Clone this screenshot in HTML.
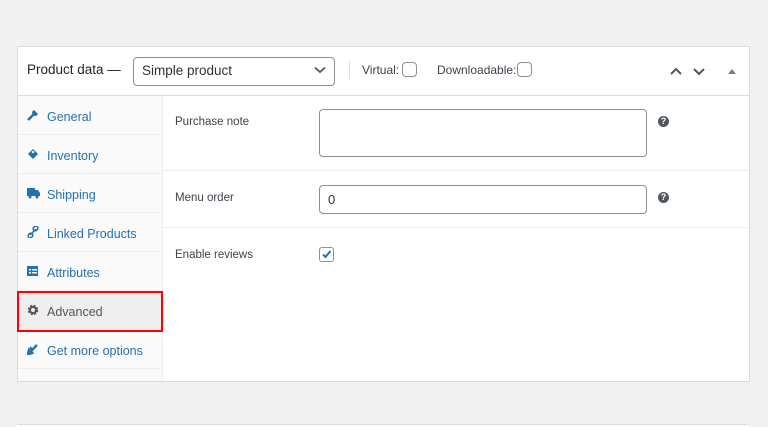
<!DOCTYPE html>
<html><head><style>
body{margin:0;width:768px;height:426px;background:#f1f1f1;font-family:"Liberation Sans",sans-serif;position:relative;overflow:hidden;font-size:12px;color:#3c434a}
.a{position:absolute}
.panel{left:17px;top:46px;width:731px;height:334px;background:#fff;border:1px solid #dcdcde}
.side{left:18px;top:96px;width:144px;height:285px;background:#fafafa;border-right:1px solid #eee}
.tab{position:absolute;left:0;width:144px;height:38px;border-bottom:1px solid #eee;color:#2271b1;font-size:12.5px}
.tab span{position:absolute;left:29px;top:14px}
.tab svg{position:absolute;left:9px;top:13px}
.lbl{font-size:11.5px;color:#3c434a}
.inp{border:1px solid #8c8f94;border-radius:4px;background:#fff}
.help{width:11px;height:11px;border-radius:50%;background:#50575e;color:#fff;font-size:9px;font-weight:bold;text-align:center;line-height:11px}
.cb{width:13px;height:13px;border:1px solid #8c8f94;border-radius:3px;background:#fff}
</style></head><body>
<div class="a panel"></div>
<div class="a" style="left:18px;top:95px;width:731px;height:1px;background:#dcdcde"></div>
<div class="a" style="left:27px;top:62px;font-size:13.5px;color:#1d2327">Product data —</div>
<div class="a inp" style="left:133px;top:57px;width:200px;height:27px"></div>
<div class="a" style="left:142px;top:63px;font-size:13.5px;color:#2c3338">Simple product</div>
<svg class="a" style="left:314px;top:66px" width="12" height="8"><path d="M1 1.5L6 6 11 1.5" stroke="#50575e" stroke-width="1.8" fill="none"/></svg>
<div class="a" style="left:349px;top:61px;width:1px;height:18px;background:#dcdcde"></div>
<div class="a" style="left:362px;top:63px;font-size:12px;color:#3c434a">Virtual:</div>
<div class="a cb" style="left:402px;top:62px;border-radius:4px"></div>
<div class="a" style="left:437px;top:63px;font-size:12px;color:#3c434a">Downloadable:</div>
<div class="a cb" style="left:517px;top:62px;border-radius:4px"></div>
<svg class="a" style="left:669px;top:65px" width="80" height="12"><path d="M2 9L7 4 12 9M25 4L30 9 35 4" stroke="#50575e" stroke-width="2" fill="none"/><path d="M59 9L63 4 67 9Z" fill="#787c82"/></svg>
<div class="a side">
<div class="tab" style="top:0"><svg width="12" height="12"><path d="M1 11L6 6" stroke="#2271b1" stroke-width="2.5"/><circle cx="8" cy="4" r="3" fill="#2271b1"/><path d="M8 1L11 4" stroke="#fafafa" stroke-width="1.5"/></svg><span>General</span></div>
<div class="tab" style="top:39px"><svg width="12" height="12"><path d="M1 6L6 1 11 6 6 11Z" fill="#2271b1"/><circle cx="6" cy="4" r="1.2" fill="#fafafa"/></svg><span>Inventory</span></div>
<div class="tab" style="top:78px"><svg width="13" height="12"><rect x="0" y="1" width="8" height="8" fill="#2271b1"/><path d="M8 3h3l2 3v3H8Z" fill="#2271b1"/><circle cx="3" cy="10" r="1.5" fill="#2271b1"/><circle cx="10" cy="10" r="1.5" fill="#2271b1"/></svg><span>Shipping</span></div>
<div class="tab" style="top:117px"><svg width="12" height="12"><path d="M3 9L9 3" stroke="#2271b1" stroke-width="1.5"/><rect x="6" y="0.5" width="5" height="4" rx="2" transform="rotate(-45 8.5 2.5)" fill="none" stroke="#2271b1" stroke-width="1.5"/><rect x="1" y="7.5" width="5" height="4" rx="2" transform="rotate(-45 3.5 9.5)" fill="none" stroke="#2271b1" stroke-width="1.5"/></svg><span>Linked Products</span></div>
<div class="tab" style="top:156px"><svg width="12" height="12"><rect x="0" y="1" width="11" height="10" fill="#2271b1"/><rect x="2" y="4" width="2" height="1.5" fill="#fafafa"/><rect x="5" y="4" width="5" height="1.5" fill="#fafafa"/><rect x="2" y="7" width="2" height="1.5" fill="#fafafa"/><rect x="5" y="7" width="5" height="1.5" fill="#fafafa"/></svg><span>Attributes</span></div>
<div class="tab" style="top:195px;background:#eee;color:#50575e"><svg width="12" height="12"><circle cx="6" cy="6" r="4" fill="none" stroke="#50575e" stroke-width="2.5" stroke-dasharray="2 1.2"/><circle cx="6" cy="6" r="3" fill="none" stroke="#50575e" stroke-width="2"/></svg><span>Advanced</span></div>
<div class="tab" style="top:234px"><svg width="12" height="12"><path d="M2 10L10 2M1 11l4-1-3-3Z" stroke="#2271b1" stroke-width="2.5" fill="#2271b1"/><path d="M3 4l3 4" stroke="#2271b1" stroke-width="2"/></svg><span>Get more options</span></div>
</div>
<div class="a" style="left:17px;top:291px;width:142px;height:37px;border:2px solid #f00"></div>
<div class="a lbl" style="left:175px;top:116px">Purchase note</div>
<div class="a inp" style="left:319px;top:109px;width:326px;height:46px"></div>
<div class="a help" style="left:658px;top:116px">?</div>
<div class="a" style="left:163px;top:170px;width:585px;height:1px;background:#eee"></div>
<div class="a lbl" style="left:175px;top:192px">Menu order</div>
<div class="a inp" style="left:319px;top:185px;width:326px;height:27px"></div>
<div class="a" style="left:328px;top:192px;font-size:13px;color:#2c3338">0</div>
<div class="a help" style="left:658px;top:192px">?</div>
<div class="a" style="left:163px;top:227px;width:585px;height:1px;background:#eee"></div>
<div class="a lbl" style="left:175px;top:249px">Enable reviews</div>
<div class="a cb" style="left:319px;top:247px"></div>
<svg class="a" style="left:320px;top:248px" width="13" height="13"><path d="M3 6.5L5.5 9 10.5 3" stroke="#2271b1" stroke-width="2" fill="none"/></svg>
<div class="a" style="left:17px;top:424px;width:731px;height:2px;background:#fff;border-top:1px solid #dcdcde"></div>
</body></html>
